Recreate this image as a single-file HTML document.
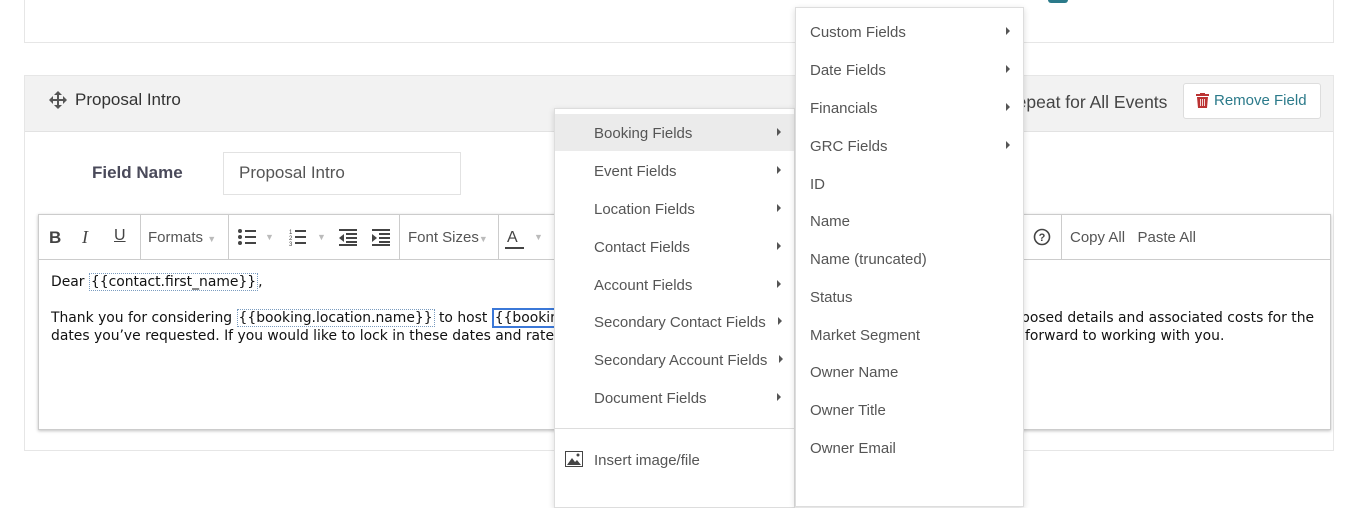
<!DOCTYPE html>
<html><head><meta charset="utf-8"><style>
*{margin:0;padding:0;box-sizing:border-box}
body{width:1352px;height:498px;background:#fff;position:relative;overflow:hidden;font-family:"Liberation Sans",sans-serif}
.a{position:absolute}
.mi{position:absolute;font-size:15px;color:#555;white-space:nowrap}
.ar{position:absolute;width:0;height:0;border-top:4px solid transparent;border-bottom:4px solid transparent;border-left:4px solid #555}
.tb{position:absolute;top:228px;font-size:15px;color:#555}
.ph{border:1px dotted #7a9cc0;padding:0 1px}
.sep{position:absolute;top:215px;width:1px;height:44px;background:#ccc}
.et{position:absolute;font-family:'DejaVu Sans',sans-serif;font-size:13.9px;color:#111;white-space:nowrap;line-height:18px}
</style></head><body>
<div class="a" style="left:24px;top:-2px;width:1310px;height:45px;border:1px solid #e6e6e6;border-top:none"></div>
<div class="a" style="left:1048px;top:-4px;width:20px;height:7px;background:#2b7a8a;border-radius:3px"></div>
<div class="a" style="left:24px;top:75px;width:1310px;height:376px;border:1px solid #e6e6e6"></div>
<div class="a" style="left:25px;top:76px;width:1308px;height:56px;background:#f2f2f2;border-bottom:1px solid #e2e2e2"></div>
<svg class="a" style="left:49px;top:91px" width="18" height="18" viewBox="0 0 18 18"><path d="M9 1v16M1 9h16" stroke="#555" stroke-width="2"/><path d="M9 0l-4 4h8zM9 18l-4-4h8zM0 9l4-4v8zM18 9l-4-4v8z" fill="#555"/></svg>
<div class="a" style="left:75px;top:90px;font-size:17px;color:#333">Proposal Intro</div>
<div class="a" style="left:1004px;top:92px;font-size:17.5px;color:#444">Repeat for All Events</div>
<div class="a" style="left:1183px;top:83px;width:138px;height:36px;background:#fff;border:1px solid #ddd;border-radius:3px"></div>
<svg class="a" style="left:1196px;top:93px" width="13" height="15" viewBox="0 0 13 15"><rect x="0" y="1" width="13" height="2" fill="#b33"/><rect x="4" y="0" width="5" height="2" fill="#b33"/><path d="M1 4h11l-1 11H2z" fill="#b33"/><path d="M4.5 6v7M6.5 6v7M8.5 6v7" stroke="#fff" stroke-width=".8"/></svg>
<div class="a" style="left:1214px;top:92px;font-size:15px;color:#2b7a8a">Remove Field</div>
<div class="a" style="left:92px;top:163px;font-size:17px;font-weight:bold;color:#4a4a5a">Field Name</div>
<div class="a" style="left:223px;top:152px;width:238px;height:43px;border:1px solid #e2e2e2"></div>
<div class="a" style="left:239px;top:163px;font-size:17px;color:#555">Proposal Intro</div>
<div class="a" style="left:38px;top:214px;width:1293px;height:216px;border:1px solid #ccc;box-shadow:0 1px 3px rgba(0,0,0,.25)"></div>
<div class="a" style="left:39px;top:259px;width:1291px;height:1px;background:#ccc"></div>
<div class="tb" style="left:49px;font-weight:bold;font-size:17px;color:#444;top:228px">B</div>
<div class="tb" style="left:82px;font-style:italic;font-size:18px;font-family:'Liberation Serif',serif;color:#444;top:227px">I</div>
<div class="tb" style="left:114px;text-decoration:underline;font-size:16px;color:#444;top:227px">U</div>
<div class="sep" style="left:140px"></div>
<div class="tb" style="left:148px;font-size:15px;top:229px">Formats <span style="color:#bbb;font-size:9px">▼</span></div>
<div class="sep" style="left:228px"></div>
<svg class="a" style="left:237px;top:228px" width="20" height="18"><circle cx="3" cy="3" r="2" fill="#444"/><circle cx="3" cy="9" r="2" fill="#444"/><circle cx="3" cy="15" r="2" fill="#444"/><path d="M8 3h11M8 9h11M8 15h11" stroke="#444" stroke-width="2"/></svg>
<div class="tb" style="left:265px;color:#bbb;font-size:9px;top:232px">▼</div>
<svg class="a" style="left:289px;top:228px" width="20" height="18"><text x="0" y="6" font-size="6" fill="#444">1</text><text x="0" y="12" font-size="6" fill="#444">2</text><text x="0" y="18" font-size="6" fill="#444">3</text><path d="M6 3h11M6 9h11M6 15h11" stroke="#444" stroke-width="2"/></svg>
<div class="tb" style="left:317px;color:#bbb;font-size:9px;top:232px">▼</div>
<svg class="a" style="left:338px;top:228px" width="20" height="18"><path d="M1 2h18M8 6h11M8 10h11M8 14h11M1 17h18" stroke="#444" stroke-width="2"/><path d="M6 6v8l-5-4z" fill="#444"/></svg>
<svg class="a" style="left:371px;top:228px" width="20" height="18"><path d="M1 2h18M8 6h11M8 10h11M8 14h11M1 17h18" stroke="#444" stroke-width="2"/><path d="M1 6v8l5-4z" fill="#444"/></svg>
<div class="sep" style="left:399px"></div>
<div class="tb" style="left:408px;top:229px">Font Sizes<span style="color:#bbb;font-size:9px">▼</span></div>
<div class="sep" style="left:498px"></div>
<div class="tb" style="left:507px;font-size:16px;color:#444;top:229px">A</div>
<div class="a" style="left:505px;top:247px;width:19px;height:2px;background:#444"></div>
<div class="tb" style="left:534px;color:#bbb;font-size:9px;top:232px">▼</div>
<div class="sep" style="left:1061px"></div>
<svg class="a" style="left:1033px;top:228px" width="18" height="18"><circle cx="9" cy="9" r="7.5" fill="none" stroke="#444" stroke-width="1.6"/><text x="9" y="13" font-size="11" font-weight="bold" text-anchor="middle" fill="#444" font-family="Liberation Sans">?</text></svg>
<div class="tb" style="left:1070px;top:229px">Copy All&nbsp;&nbsp; Paste All</div>
<div class="et" style="left:51px;top:273px">Dear <span class="ph">{{contact.first_name}}</span>,</div>
<div class="et" style="left:51px;top:309px">Thank you for considering <span class="ph">{{booking.location.name}}</span> to host <span style="border:2px solid #3b78d8;padding:0 1px">{{booking</span></div>
<div class="et" style="left:51px;top:327px">dates you’ve requested. If you would like to lock in these dates and rate</div>
<div class="et" style="left:1021px;top:309px">posed details and associated costs for the</div>
<div class="et" style="left:1025px;top:327px">forward to working with you.</div>
<div class="a" style="left:554px;top:108px;width:241px;height:400px;background:#fff;border:1px solid #ddd;box-shadow:0 2px 6px rgba(0,0,0,.15)"></div>
<div class="a" style="left:555px;top:114px;width:239px;height:37px;background:#ebebeb"></div>
<div class="mi" style="left:594px;top:125px">Booking Fields</div><div class="ar" style="left:777px;top:128px"></div>
<div class="mi" style="left:594px;top:163px">Event Fields</div><div class="ar" style="left:777px;top:166px"></div>
<div class="mi" style="left:594px;top:201px">Location Fields</div><div class="ar" style="left:777px;top:204px"></div>
<div class="mi" style="left:594px;top:239px">Contact Fields</div><div class="ar" style="left:777px;top:242px"></div>
<div class="mi" style="left:594px;top:277px">Account Fields</div><div class="ar" style="left:777px;top:280px"></div>
<div class="mi" style="left:594px;top:314px">Secondary Contact Fields</div><div class="ar" style="left:778px;top:317px"></div>
<div class="mi" style="left:594px;top:352px">Secondary Account Fields</div><div class="ar" style="left:779px;top:355px"></div>
<div class="mi" style="left:594px;top:390px">Document Fields</div><div class="ar" style="left:777px;top:393px"></div>
<div class="a" style="left:555px;top:428px;width:239px;height:1px;background:#ddd"></div>
<svg class="a" style="left:565px;top:451px" width="18" height="16"><rect x=".5" y=".5" width="17" height="15" fill="#fff" stroke="#444"/><path d="M2 14l5-7 3 4 2-2 4 5z" fill="#444"/><circle cx="13" cy="4" r="1.5" fill="#444"/></svg>
<div class="mi" style="left:594px;top:452px">Insert image/file</div>
<div class="a" style="left:795px;top:7px;width:229px;height:500px;background:#fff;border:1px solid #ddd;box-shadow:0 2px 6px rgba(0,0,0,.15)"></div>
<div class="mi" style="left:810px;top:24px">Custom Fields</div><div class="ar" style="left:1006px;top:27px"></div>
<div class="mi" style="left:810px;top:62px">Date Fields</div><div class="ar" style="left:1006px;top:65px"></div>
<div class="mi" style="left:810px;top:100px">Financials</div><div class="ar" style="left:1006px;top:103px"></div>
<div class="mi" style="left:810px;top:138px">GRC Fields</div><div class="ar" style="left:1006px;top:141px"></div>
<div class="mi" style="left:810px;top:176px">ID</div>
<div class="mi" style="left:810px;top:213px">Name</div>
<div class="mi" style="left:810px;top:251px">Name (truncated)</div>
<div class="mi" style="left:810px;top:289px">Status</div>
<div class="mi" style="left:810px;top:327px">Market Segment</div>
<div class="mi" style="left:810px;top:364px">Owner Name</div>
<div class="mi" style="left:810px;top:402px">Owner Title</div>
<div class="mi" style="left:810px;top:440px">Owner Email</div>
</body></html>
